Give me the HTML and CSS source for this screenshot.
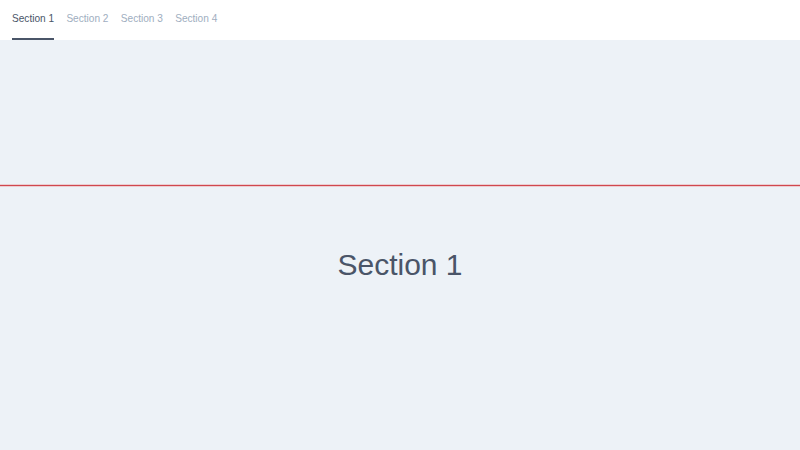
FILE: index.html
```html
<!DOCTYPE html>
<html>
<head>
<meta charset="utf-8">
<link rel="stylesheet" href="styles.css">
</head>
<body>
<nav class="tabs">
  <a class="tab active">Section 1</a>
  <a class="tab">Section 2</a>
  <a class="tab">Section 3</a>
  <a class="tab">Section 4</a>
</nav>
<main class="content">
  <div class="marker"></div>
  <section class="section">
    <h1 class="title">Section 1</h1>
  </section>
</main>
</body>
</html>
```
FILE: styles.css
```css
html, body {
  margin: 0;
  padding: 0;
  height: 100%;
  overflow: hidden;
}
body {
  font-family: "Liberation Sans", Arial, sans-serif;
  background: #edf2f7;
  color: #4a5568;
}
.tabs {
  height: 40px;
  background: #ffffff;
  display: flex;
  align-items: stretch;
  padding-left: 12px;
  gap: 12.3px;
  box-sizing: border-box;
}
.tab {
  display: flex;
  align-items: center;
  font-size: 10.1px;
  color: #a0aec0;
  border-bottom: 2px solid transparent;
  box-sizing: border-box;
  padding-bottom: 1px;
}
.tab.active {
  color: #4a5568;
  border-bottom-color: #4a5568;
}
.content {
  position: relative;
  height: 410px;
  overflow: hidden;
}
.marker {
  position: absolute;
  left: 0;
  right: 0;
  top: 145px;
  height: 1px;
  background: #d0484e;
  box-shadow: 0 1px 0 rgba(229, 62, 62, 0.2), 0 -1px 0 rgba(229, 62, 62, 0.2);
  z-index: 1;
}
.section {
  height: 450px;
  display: flex;
  align-items: center;
  justify-content: center;
}
.title {
  margin: 0;
  font-size: 30px;
  font-weight: 400;
}
```
